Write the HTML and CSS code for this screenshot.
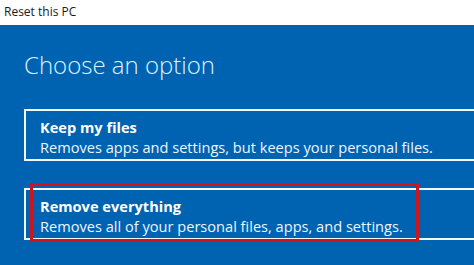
FILE: index.html
```html
<html>
<head>
    <title>Reset this PC</title>
    <link rel="stylesheet" href="styles.css">
</head>
<body>
    <div class="titlebar">Reset this PC</div>
    <div class="panel">
        <div class="heading">Choose an option</div>
        <div class="option">
            <div class="option-title">Keep my files</div>
            <div class="option-text">Removes apps and settings, but keeps your personal files.</div>
        </div>
        <div class="option">
            <div class="option-title">Remove everything</div>
            <div class="option-text">Removes all of your personal files, apps, and settings.</div>
            <div class="highlight"></div>
        </div>
    </div>
</body>
</html>
```

FILE: styles.css
```css
body {
    font-family: "Open Sans", "Noto Sans", sans-serif;
    margin: 0;
    padding: 0;
    width: 474px;
    height: 265px;
    overflow: hidden;
    background-color: #0063b1;
}
.titlebar {
    height: 25px;
    line-height: 24px;
    background-color: #ffffff;
    color: #1a1a1a;
    font-size: 12px;
    padding-left: 4px;
}
.panel {
    height: 240px;
    background-color: #0063b1;
    padding-left: 24px;
    overflow: hidden;
}
.heading {
    color: #dff2ff;
    font-size: 24px;
    font-weight: 300;
    padding-top: 23px;
    height: 84px;
    box-sizing: border-box;
}
.option {
    position: relative;
    width: 480px;
    height: 52px;
    border: 2px solid #f2f8ff;
    box-sizing: border-box;
    padding: 6px 14px;
    color: #ffffff;
    margin-bottom: 27px;
}
.option-title {
    font-size: 14.6px;
    font-weight: bold;
    line-height: 20px;
}
.option-text {
    font-size: 14.6px;
    line-height: 20px;
    color: #eef6ff;
    white-space: nowrap;
}
.highlight {
    position: absolute;
    left: 4px;
    top: -7px;
    width: 389px;
    height: 59px;
    border: 3px solid #d0141e;
    box-sizing: border-box;
}
```
